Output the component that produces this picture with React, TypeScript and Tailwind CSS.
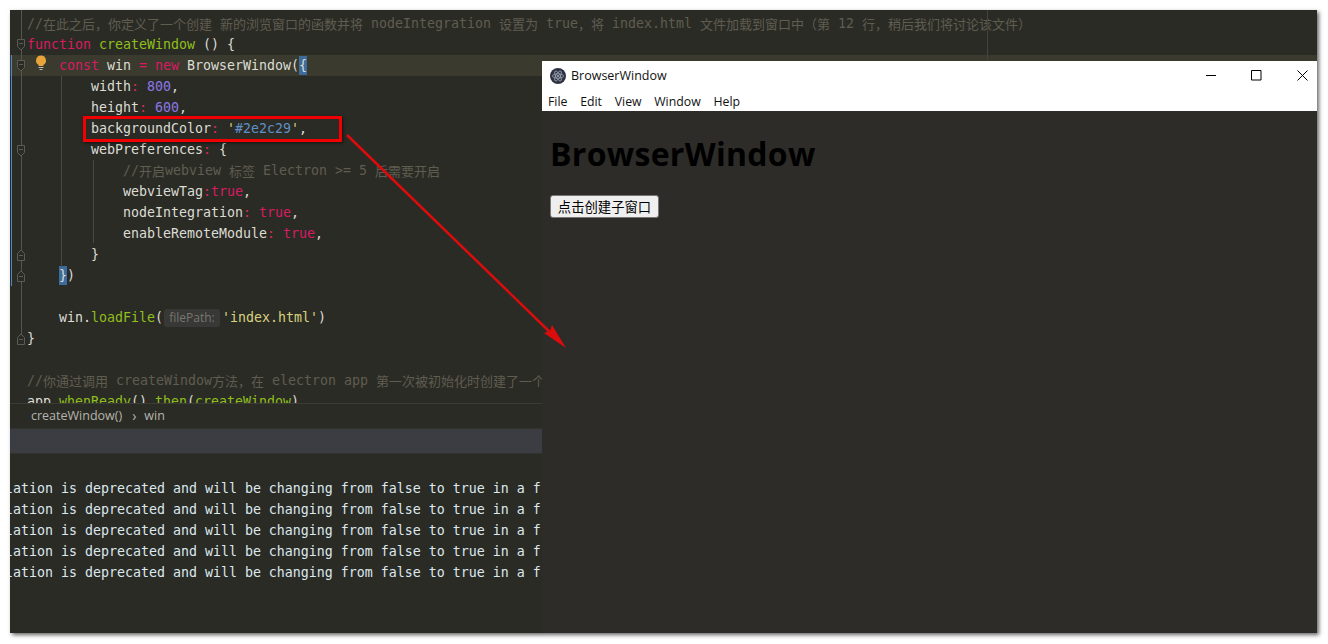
import React from "react";

type Seg = [string, string?];

const mono = "font-['DejaVu_Sans_Mono','Noto_Sans_CJK_SC',monospace]";
const cjk = "text-[13px] font-['Noto_Sans_CJK_SC','DejaVu_Sans_Mono',sans-serif]";

const KW = "text-[#d81b60]";
const FN = "text-[#8fbf1c]";
const NUM = "text-[#8a78e6]";
const COM = "text-[#5f5d4f]";
const STR = "text-[#d8d27e]";
const HEX = "text-[#5f8fc4]";
const PUNCT = "text-[#d02c5c]";

const codeLines: Seg[][] = [
  [["//", COM], ["@在此之后，你定义了一个创建", COM], [" ", COM], ["@新的浏览窗口的函数并将", COM], [" nodeIntegration ", COM], ["@设置为", COM], [" true", COM], ["@，将", COM], [" index.html ", COM], ["@文件加载到窗口中（第", COM], [" 12 ", COM], ["@行，稍后我们将讨论该文件）", COM]],
  [["function", KW], [" "], ["createWindow", FN], [" () {"]],
  [["    "], ["const", KW], [" win "], ["=", KW], [" "], ["new", KW], [" BrowserWindow("], ["{", "bg-[#3c6c9c]"]],
  [["        width"], [":", PUNCT], [" "], ["800", NUM], [","]],
  [["        height"], [":", PUNCT], [" "], ["600", NUM], [","]],
  [["        backgroundColor"], [":", PUNCT], [" "], ["'", STR], ["#2e2c29", HEX], ["'", STR], [","]],
  [["        webPreferences"], [":", PUNCT], [" {"]],
  [["            "], ["//", COM], ["@开启", COM], ["webview ", COM], ["@标签", COM], [" Electron >= 5 ", COM], ["@后需要开启", COM]],
  [["            webviewTag"], [":", PUNCT], ["true", KW], [","]],
  [["            nodeIntegration"], [":", PUNCT], [" "], ["true", KW], [","]],
  [["            enableRemoteModule"], [":", PUNCT], [" "], ["true", KW], [","]],
  [["        }"]],
  [["    "], ["}", "bg-[#3c6c9c]"], [")"]],
  [[" "]],
  [["    win."], ["loadFile", FN], ["("], ["#hint"], ["'index.html'", STR], [")"]],
  [["}"]],
  [[" "]],
  [["//", COM], ["@你通过调用", COM], [" createWindow", COM], ["@方法，在", COM], [" electron app ", COM], ["@第一次被初始化时创建了一个", COM]],
  [["app."], ["whenReady", FN], ["()."], ["then", FN], ["("], ["createWindow", FN], [")"]],
];

function CodeLine({ segs, active }: { segs: Seg[]; active: boolean }) {
  return (
    <div className={`flex h-[21px] items-center whitespace-pre pl-[17px] ${active ? "bg-[#3a3a2f]" : ""}`}>
      {segs.map(([text, cls], i) => {
        if (text === "#hint") {
          return (
            <span key={i} className="ml-[1px] mr-[2px] flex h-[18px] w-[56px] items-center justify-center rounded-[3px] bg-[#383836] font-['Open_Sans',sans-serif] text-[12px] text-[#77776f]">
              filePath:
            </span>
          );
        }
        if (text.startsWith("@")) {
          return <span key={i} className={`${cjk} ${cls ?? ""}`}>{text.slice(1)}</span>;
        }
        return <span key={i} className={cls}>{text}</span>;
      })}
    </div>
  );
}

function FoldMark({ y, up }: { y: number; up?: boolean }) {
  return (
    <svg className={`absolute left-[6px] ${up ? "rotate-180" : ""}`} style={{ top: y }} width="10" height="12" viewBox="0 0 10 12" fill="#2b2b26" stroke="#5c5c56">
      <path d="M1.5 .5h7v7l-3.5 3.5-3.5-3.5z" />
      <path d={up ? "M3 5.5h4" : "M3 4.5h4"} />
    </svg>
  );
}

function Editor() {
  return (
    <div className={`relative flex h-full w-full flex-col bg-[#2b2b26] text-[13.29px] text-[#dcdcd4] ${mono}`}>
      <div className="relative h-[393px] shrink-0 overflow-hidden pt-[3px]">
        {codeLines.map((segs, i) => (
          <CodeLine key={i} segs={segs} active={i === 2} />
        ))}

        {/* gutter decorations, over the code */}
        <div className="absolute left-[11px] top-0 h-[333px] w-px bg-[#55554f]" />
        <div className="absolute left-[1px] top-[45px] h-[231px] w-px bg-[#4a88c8]" />
        <div className="absolute left-[51px] top-[66px] h-[191px] w-px bg-[#4a4a44]" />
        <div className="absolute left-[83px] top-[150px] h-[83px] w-px bg-[#4a4a44]" />
        <div className="absolute left-[977px] top-0 h-[50px] w-px bg-[#44443e]" />
        <FoldMark y={29} />
        <FoldMark y={50} />
        <FoldMark y={135} />
        <FoldMark y={239} up />
        <FoldMark y={260} up />
        <FoldMark y={323} up />
        <svg className="absolute left-[24px] top-[45px]" width="14" height="16" viewBox="0 0 14 16">
          <path d="M7 .5a5 5 0 0 0-3 9c.6.5.8 1 .8 1.5h4.4c0-.5.2-1 .8-1.5a5 5 0 0 0-3-9z" fill="#e8a33a" />
          <path d="M4.5 12.5h5M5.5 14.5h3" stroke="#b8b8b0" />
        </svg>
      </div>

      <div className="flex h-[25px] shrink-0 items-center border-t border-[#3c3c36] pl-[21px] font-['Open_Sans',sans-serif] text-[12.5px] text-[#b4b4ac]">
        <span>createWindow()</span>
        <span className="ml-[10px] mr-[8px] text-[14px] leading-none">›</span>
        <span>win</span>
      </div>
      <div className="h-[26px] shrink-0 border-y border-[#33332e] bg-[#3b3d42]" />

      <div className="flex flex-col overflow-hidden pt-[24px] text-[#dbe8ee]">
        {[0, 1, 2, 3, 4].map((i) => (
          <div key={i} className="-ml-[5px] flex h-[21px] items-center whitespace-pre">
            lation is deprecated and will be changing from false to true in a f
          </div>
        ))}
      </div>
    </div>
  );
}

function ElectronIcon() {
  return (
    <svg width="16" height="16" viewBox="0 0 16 16" fill="none">
      <circle cx="8" cy="8" r="8" fill="#2f3242" />
      <g stroke="#aab4c0" strokeWidth=".7">
        <ellipse cx="8" cy="8" rx="5.6" ry="2.2" />
        <ellipse cx="8" cy="8" rx="5.6" ry="2.2" transform="rotate(60 8 8)" />
        <ellipse cx="8" cy="8" rx="5.6" ry="2.2" transform="rotate(120 8 8)" />
      </g>
      <circle cx="8" cy="8" r="1" fill="#aab4c0" />
    </svg>
  );
}

function BrowserWin() {
  return (
    <div className="absolute left-[532px] top-[51px] flex h-[572px] w-[775px] flex-col bg-[#2e2c29] font-['Open_Sans','Noto_Sans_CJK_SC',sans-serif]">
      <div className="flex h-[29px] shrink-0 items-center bg-white pl-[8px] text-[12.5px] text-[#111]">
        <ElectronIcon />
        <span className="ml-[5px] translate-y-[1px]">BrowserWindow</span>
        <div className="ml-auto flex items-center">
          <svg width="11" height="11" viewBox="0 0 11 11" stroke="#000" fill="none"><path d="M0 5.5h10" /></svg>
          <svg className="ml-[34px]" width="11" height="11" viewBox="0 0 11 11" stroke="#000" fill="none"><path d="M.5.5h9.5v9.5H.5z" /></svg>
          <svg className="ml-[35px] mr-[9px]" width="11" height="11" viewBox="0 0 11 11" stroke="#000" fill="none"><path d="M.5.5l10 10M10.5.5l-10 10" /></svg>
        </div>
      </div>
      <div className="flex h-[21px] shrink-0 items-center gap-[12.7px] bg-white pl-[6px] pt-[3px] text-[12.3px] text-[#111]">
        <span>File</span>
        <span>Edit</span>
        <span>View</span>
        <span>Window</span>
        <span>Help</span>
      </div>
      <div className="flex flex-col items-start px-[8px]">
        <h1 className="mt-[21px] text-[32px] font-bold leading-[44px] tracking-[0.3px] text-black">BrowserWindow</h1>
        <button className="mt-[19px] h-[23px] w-[109px] rounded-[3px] border border-[#767676] bg-[#efefef] font-['Noto_Sans_CJK_SC',sans-serif] text-[13.33px] text-black">
          点击创建子窗口
        </button>
      </div>
    </div>
  );
}

export default function App() {
  return (
    <div className="h-[644px] w-[1328px] overflow-hidden bg-white p-[10px]">
      <div className="relative h-[623px] w-[1307px] shadow-[2px_2px_4px_rgba(0,0,0,0.6)]">
        <div className="h-full w-full overflow-hidden">
          <Editor />
        </div>
        <BrowserWin />

        {/* annotation box and arrow */}
        <div className="absolute left-[73px] top-[106px] h-[26px] w-[259px] border-[3px] border-[#f00000] shadow-[1px_1px_3px_rgba(0,0,0,0.6)]" />
        <svg className="absolute left-0 top-0" width="1307" height="623" fill="none">
          <path d="M337 125L546 328" stroke="#dc0c0c" strokeWidth="2.5" />
          <path d="M556 338L534 323L540 321L542 315z" fill="#dc0c0c" />
        </svg>
      </div>
    </div>
  );
}
